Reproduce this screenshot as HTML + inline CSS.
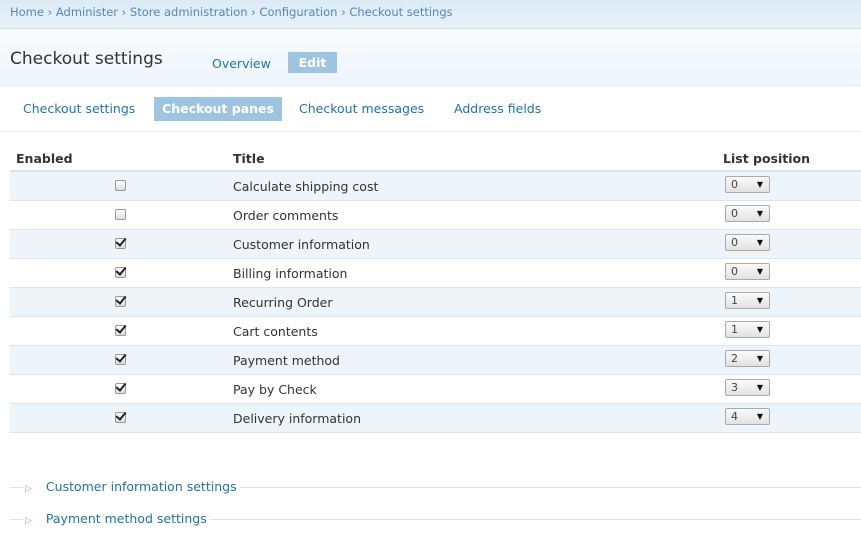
<!DOCTYPE html>
<html><head><style>
body{margin:0;width:861px;height:543px;overflow:hidden;background:#fff;font-family:"DejaVu Sans","Liberation Sans",sans-serif;color:#333;position:relative}
a{color:#1f73a7;text-decoration:none}
.bc{position:absolute;left:0;top:0;width:861px;height:28px;background:linear-gradient(#dbeaf6,#e8f1f9);border-bottom:1px solid #cfdfee;font-size:11.5px;line-height:24px}
.bc span{position:absolute;left:10px;top:0;color:#5389b4;white-space:nowrap}
.hd{position:absolute;left:0;top:29px;width:861px;height:56px;background:linear-gradient(#f8fbfd,#eef5fb);border-bottom:1px solid #e2ebf3}
h1{position:absolute;left:10px;top:49px;margin:0;font-size:17px;font-weight:normal;color:#333}
.t{position:absolute;font-size:12.5px;white-space:nowrap}
.act{background:#9ec4e2;color:#fff;font-weight:bold;text-align:center}
.line2{position:absolute;left:0;top:131px;width:861px;border-top:1px solid #e2ebf3}
table{position:absolute;left:10px;top:146px;width:851px;border-collapse:collapse;font-size:12.5px}
th{text-align:left;font-weight:bold;height:24px;padding:0 6px;border-bottom:2px solid #d6e5f2;color:#333}
td{height:28px;border-bottom:1px solid #dbe6ef;padding:0}
tr.o td{background:#edf4fa}
.cb{display:inline-block;width:9px;height:9px;border:1px solid #999;border-radius:2px;background:linear-gradient(#fff,#ddd);position:relative}
.ck:after{content:"";position:absolute;left:2px;top:-3px;width:4px;height:8px;border-right:2px solid #222;border-bottom:2px solid #222;transform:rotate(40deg)}
.sel{display:inline-block;width:43px;height:15px;border:1px solid #aaa;border-radius:2px;background:linear-gradient(#fafafa,#e2e2e2);font-size:11px;line-height:15px;position:relative;color:#444}
.sel span{position:absolute;left:5px}
.sel i{position:absolute;right:6px;top:0;font-style:normal;font-size:8px;color:#111}
.fs{position:absolute;left:10px;width:851px;border-top:1px solid #d6e5f2;font-size:12.5px}
.fs span{position:absolute;top:-9px;left:13px;background:#fff;padding:0 3px 0 0;white-space:nowrap}
.fs b{font-weight:normal;color:#aaa;font-size:9px;margin:0 14px 0 2px}
</style></head><body>
<div class="bc"><span>Home › Administer › Store administration › Configuration › Checkout settings</span></div>
<div class="hd"></div>
<h1>Checkout settings</h1>
<a class="t" style="left:212px;top:56px">Overview</a>
<span class="t act" style="left:288px;top:52px;height:21px;line-height:22px;width:49px">Edit</span>
<a class="t" style="left:23px;top:101px">Checkout settings</a>
<span class="t act" style="left:154px;top:97px;height:24px;line-height:24px;width:128px">Checkout panes</span>
<a class="t" style="left:299px;top:101px">Checkout messages</a>
<a class="t" style="left:454px;top:101px">Address fields</a>
<div class="line2"></div>
<table>
<tr><th style="width:205px">Enabled</th><th>Title</th><th style="width:138px;padding:0">List position</th></tr>
<tr class="o"><td style="padding-left:105px"><span class="cb"></span></td><td style="padding-left:6px">Calculate shipping cost</td><td style="padding-left:2px"><span class="sel"><span>0</span><i>▼</i></span></td></tr>
<tr><td style="padding-left:105px"><span class="cb"></span></td><td style="padding-left:6px">Order comments</td><td style="padding-left:2px"><span class="sel"><span>0</span><i>▼</i></span></td></tr>
<tr class="o"><td style="padding-left:105px"><span class="cb ck"></span></td><td style="padding-left:6px">Customer information</td><td style="padding-left:2px"><span class="sel"><span>0</span><i>▼</i></span></td></tr>
<tr><td style="padding-left:105px"><span class="cb ck"></span></td><td style="padding-left:6px">Billing information</td><td style="padding-left:2px"><span class="sel"><span>0</span><i>▼</i></span></td></tr>
<tr class="o"><td style="padding-left:105px"><span class="cb ck"></span></td><td style="padding-left:6px">Recurring Order</td><td style="padding-left:2px"><span class="sel"><span>1</span><i>▼</i></span></td></tr>
<tr><td style="padding-left:105px"><span class="cb ck"></span></td><td style="padding-left:6px">Cart contents</td><td style="padding-left:2px"><span class="sel"><span>1</span><i>▼</i></span></td></tr>
<tr class="o"><td style="padding-left:105px"><span class="cb ck"></span></td><td style="padding-left:6px">Payment method</td><td style="padding-left:2px"><span class="sel"><span>2</span><i>▼</i></span></td></tr>
<tr><td style="padding-left:105px"><span class="cb ck"></span></td><td style="padding-left:6px">Pay by Check</td><td style="padding-left:2px"><span class="sel"><span>3</span><i>▼</i></span></td></tr>
<tr class="o"><td style="padding-left:105px"><span class="cb ck"></span></td><td style="padding-left:6px">Delivery information</td><td style="padding-left:2px"><span class="sel"><span>4</span><i>▼</i></span></td></tr>
</table>
<div class="fs" style="top:487px"><span><b>▷</b><a>Customer information settings</a></span></div>
<div class="fs" style="top:519px"><span><b>▷</b><a>Payment method settings</a></span></div>
</body></html>
